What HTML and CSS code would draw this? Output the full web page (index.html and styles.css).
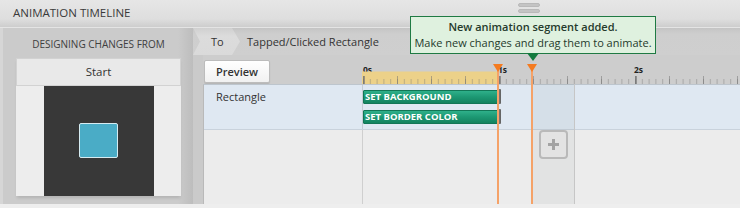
FILE: index.html
```html
<!DOCTYPE html>
<html lang="en">
<head>
<meta charset="utf-8">
<title>Animation Timeline</title>
<link rel="stylesheet" href="styles.css">
</head>
<body>
<div class="app">
  <header class="header">
    <span class="title">ANIMATION TIMELINE</span>
    <span class="grip"><i></i><i></i></span>
  </header>
  <div class="main">
    <aside class="from">
      <div class="from-title">DESIGNING CHANGES FROM</div>
      <div class="state-card">
        <div class="state-name">Start</div>
        <div class="state-preview">
          <div class="stage"><div class="shape"></div></div>
        </div>
      </div>
    </aside>
    <section class="timeline">
      <div class="crumbs">
        <span class="crumb-to">To</span>
        <span class="crumb-name">Tapped/Clicked Rectangle</span>
      </div>
      <div class="tl-body">
        <div class="toolbar">
          <div class="tool-left"><button class="preview">Preview</button></div>
          <div class="ruler">
            <svg class="ruler-svg" width="378" height="29" viewBox="0 0 378 29">
              <defs>
                <pattern id="minor" x="1" y="0" width="6.8" height="29" patternUnits="userSpaceOnUse">
                  <rect x="0" y="24" width="1" height="5" fill="#707070" fill-opacity="0.4"/>
                </pattern>
                <pattern id="medium" x="1" y="0" width="34" height="29" patternUnits="userSpaceOnUse">
                  <rect x="0" y="21" width="1" height="8" fill="#707070" fill-opacity="0.5"/>
                </pattern>
                <pattern id="major" x="1" y="0" width="136" height="29" patternUnits="userSpaceOnUse">
                  <rect x="0" y="21" width="2" height="8" fill="#707070" fill-opacity="0.65"/>
                </pattern>
              </defs>
              <text x="1" y="18" class="tick-label">0s</text>
              <text x="136" y="18" class="tick-label">1s</text>
              <text x="272" y="18" class="tick-label">2s</text>
              <rect x="0" y="16.5" width="137" height="12.5" fill="#ecd189"/>
              <rect x="0" y="0" width="378" height="29" fill="url(#minor)"/>
              <rect x="0" y="0" width="378" height="29" fill="url(#medium)"/>
              <rect x="0" y="0" width="378" height="29" fill="url(#major)"/>
            </svg>
          </div>
        </div>
        <div class="tracks">
          <div class="row">
            <div class="row-label">Rectangle</div>
            <div class="lanes">
              <div class="lane"><div class="segment" style="width:135px">SET BACKGROUND</div><span class="seg-handle"></span></div>
              <div class="lane"><div class="segment" style="width:135px">SET BORDER COLOR</div><span class="seg-handle"></span></div>
            </div>
          </div>
          <div class="empty">
            <div class="empty-label"></div>
            <div class="empty-lanes"></div>
          </div>
        </div>
        <div class="new-col">
          <button class="add-btn" aria-label="Add segment">
            <svg width="13" height="13" viewBox="0 0 13 13"><path d="M5 1h3v4h4v3H8v4H5V8H1V5h4z" fill="#a3a3a3"/></svg>
          </button>
        </div>
        <div class="marker marker-end" style="left:305px"><span class="marker-head"></span></div>
        <div class="marker marker-cur" style="left:339px"><span class="marker-head"></span></div>
      </div>
    </section>
  </div>
  <div class="footer"></div>
  <div class="tooltip">
    <div class="tip-title">New animation segment added.</div>
    <div class="tip-text">Make new changes and drag them to animate.</div>
  </div>
</div>
</body>
</html>
```
FILE: styles.css
```css
* { box-sizing: border-box; }
html, body { margin: 0; padding: 0; }
body {
  width: 740px;
  height: 208px;
  overflow: hidden;
  font-family: "Open Sans", "Liberation Sans", sans-serif;
  color: #333;
  background: #ededed;
}
.app {
  position: relative;
  width: 740px;
  height: 208px;
  display: flex;
  flex-direction: column;
}
.header {
  position: relative;
  height: 28px;
  flex: none;
  display: flex;
  align-items: center;
  padding-left: 13px;
  background: linear-gradient(#e6e6e6 0, #dedede 70%, #cdcdcd 100%);
  border-bottom: 1px solid #e4e4e4;
}
.title {
  font-size: 11.5px;
  color: #3a3a3a;
  line-height: 16px;
  margin-top: -2px;
}
.grip {
  position: absolute;
  left: 518px;
  top: 3px;
  width: 22px;
  display: flex;
  flex-direction: column;
  gap: 2px;
}
.grip i {
  display: block;
  height: 4px;
  border-radius: 2px;
  background: #c4c4c4;
  border: 1px solid #b9b9b9;
}
.main {
  flex: 1;
  display: flex;
  min-height: 0;
}
.from {
  width: 193px;
  flex: none;
  border-left: 3px solid #d6d6d6;
  background: linear-gradient(to right, #cbcbcb 0, #cbcbcb 175px, #bdbdbd 190px);
  display: flex;
  flex-direction: column;
  padding: 8px 0 0 13px;
}
.from-title {
  width: 165px;
  text-align: center;
  font-size: 10px;
  line-height: 16px;
  color: #404040;
  margin-bottom: 6px;
}
.state-card {
  width: 165px;
  box-shadow: 0 3px 3px -1px rgba(0,0,0,0.12);
}
.state-name {
  height: 28px;
  background: #e9e9e9;
  border: 1px solid #d2d2d2;
  text-align: center;
  font-size: 11.5px;
  line-height: 25px;
  color: #333;
}
.state-preview {
  height: 110px;
  background: #ededed;
  display: flex;
  justify-content: center;
}
.stage {
  width: 110px;
  height: 110px;
  background: #383838;
  display: flex;
  align-items: center;
  justify-content: center;
}
.shape {
  width: 39px;
  height: 35px;
  margin-top: -2px;
  background: #4aacc6;
  border: 1px solid #d6ecf2;
  border-radius: 2px;
}
.timeline {
  flex: 1;
  display: flex;
  flex-direction: column;
  min-width: 0;
  background: #cdcdcd;
}
.crumbs {
  height: 27px;
  flex: none;
  display: flex;
  align-items: center;
  background: linear-gradient(#c4c4c4 0, #cecece 6px, #cfcfcf 100%);
  font-size: 11px;
  color: #333;
}
.crumb-to {
  align-self: stretch;
  width: 47px;
  display: flex;
  align-items: center;
  padding-left: 18px;
  background: linear-gradient(#d0d0d0, #dcdcdc 30%, #dadada);
  clip-path: polygon(0 0, 39px 0, 47px 50%, 39px 100%, 0 100%, 7px 50%);
}
.crumb-name {
  margin-left: 7px;
}
.tl-body {
  position: relative;
  flex: 1;
  display: flex;
  flex-direction: column;
  padding-left: 10px;
  background: #cacaca;
}
.toolbar {
  height: 29px;
  flex: none;
  display: flex;
  background: #cdcdcd;
}
.tool-left {
  width: 159px;
  flex: none;
  padding: 4px 0 0 1px;
}
.preview {
  width: 66px;
  height: 23px;
  padding: 0;
  border: 1px solid #bcbcbc;
  border-radius: 2px;
  background: linear-gradient(#ffffff, #f1f1f1);
  box-shadow: 0 1px 1px rgba(0,0,0,0.12);
  font-family: "Open Sans", "Liberation Sans", sans-serif;
  font-size: 11px;
  font-weight: 600;
  color: #333;
}
.ruler {
  flex: 1;
  overflow: hidden;
}
.ruler-svg { display: block; }
.tick-label {
  font-family: "Open Sans", "Liberation Sans", sans-serif;
  font-size: 8.5px;
  font-weight: 700;
  fill: #222;
}
.tracks {
  flex: 1;
  display: flex;
  flex-direction: column;
  border-left: 1px solid #b9b9b9;
  border-top: 1px solid #bdc5cd;
  background: #ececec;
}
.row {
  height: 45px;
  flex: none;
  display: flex;
  background: #dfe8f2;
  border-bottom: 1px solid #c9d2dc;
}
.row-label {
  width: 159px;
  flex: none;
  border-right: 1px solid #c5ccd4;
  padding: 4px 0 0 12px;
  font-size: 11px;
  line-height: 16px;
  color: #333;
}
.lanes {
  flex: 1;
  display: flex;
  flex-direction: column;
  gap: 6px;
  padding-top: 5px;
}
.lane {
  display: flex;
  height: 14px;
}
.segment {
  height: 14px;
  padding-left: 1px;
  background: linear-gradient(#2fb08a 0, #1e9a75 45%, #13835f 100%);
  border: 1px solid #127656;
  border-radius: 1px;
  color: #fff;
  font-size: 9.5px;
  font-weight: 700;
  line-height: 12px;
  white-space: nowrap;
  overflow: hidden;
}
.seg-handle {
  width: 3px;
  height: 15px;
  margin-top: -1px;
  border-radius: 1px;
  background: linear-gradient(to right, #8a8a8a, #5e5e5e);
}
.empty {
  flex: 1;
  display: flex;
}
.empty-label {
  width: 159px;
  flex: none;
  border-right: 1px solid #cfcfcf;
}
.empty-lanes { flex: 1; }
.footer {
  height: 4px;
  flex: none;
  background: #eeeeee;
}
.new-col {
  position: absolute;
  left: 339px;
  top: 29px;
  bottom: 0;
  width: 43px;
  background: rgba(60, 70, 80, 0.055);
  border-right: 1px solid #c6c6c6;
  padding: 46px 0 0 7px;
}
.add-btn {
  display: flex;
  align-items: center;
  justify-content: center;
  width: 29px;
  height: 29px;
  padding: 0;
  border: 2px solid #b9b9b9;
  border-radius: 4px;
  background: #e3e3e3;
}
.marker {
  position: absolute;
  top: 9px;
  bottom: 0;
  width: 2px;
  margin-left: -1px;
  background: #f5a268;
}
.marker-head {
  position: absolute;
  top: 0;
  left: -4px;
  width: 0;
  height: 0;
  border-left: 5px solid transparent;
  border-right: 5px solid transparent;
  border-top: 8px solid #f47b20;
}
.tooltip {
  position: absolute;
  left: 410px;
  top: 16px;
  width: 246px;
  height: 38px;
  background: #dff1df;
  border: 1px solid #1f7a43;
  text-align: center;
  font-size: 11px;
  line-height: 16px;
  color: #253a2c;
  padding-top: 2px;
}
.tooltip::after {
  content: "";
  position: absolute;
  left: 116px;
  top: 36px;
  border-left: 6px solid transparent;
  border-right: 6px solid transparent;
  border-top: 8px solid #137a3e;
}
.tip-title { font-weight: 600; }
```
